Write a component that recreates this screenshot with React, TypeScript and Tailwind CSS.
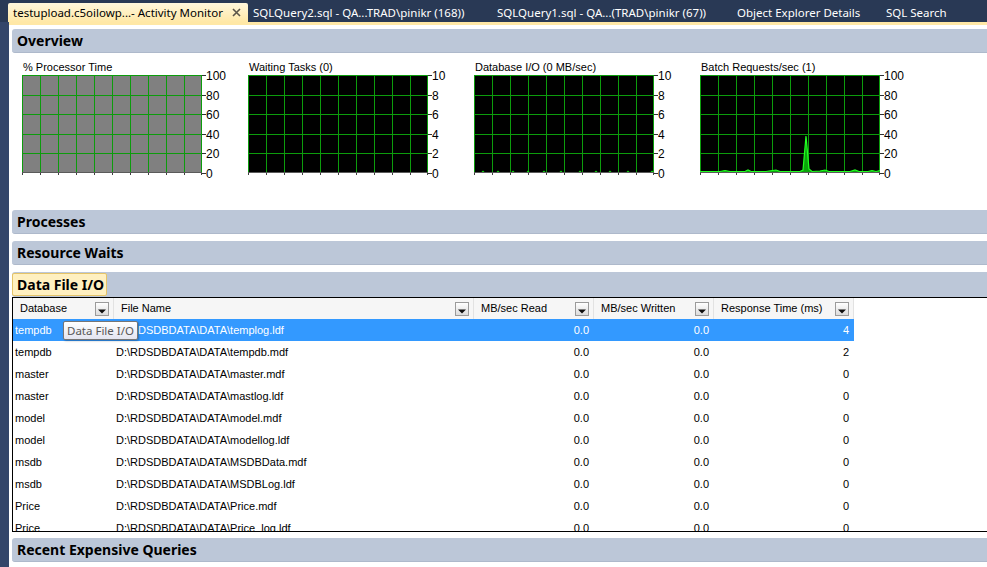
import React from "react";

const tabs = [
  { label: "SQLQuery2.sql - QA...TRAD\\pinikr (168))", w: "w-[244px]" },
  { label: "SQLQuery1.sql - QA...(TRAD\\pinikr (67))", w: "w-[240px]" },
  { label: "Object Explorer Details", w: "w-[149px]" },
  { label: "SQL Search", w: "w-[106px]" },
];

const rows = [
  ["tempdb", "D:\\RDSDBDATA\\DATA\\templog.ldf", "0.0", "0.0", "4"],
  ["tempdb", "D:\\RDSDBDATA\\DATA\\tempdb.mdf", "0.0", "0.0", "2"],
  ["master", "D:\\RDSDBDATA\\DATA\\master.mdf", "0.0", "0.0", "0"],
  ["master", "D:\\RDSDBDATA\\DATA\\mastlog.ldf", "0.0", "0.0", "0"],
  ["model", "D:\\RDSDBDATA\\DATA\\model.mdf", "0.0", "0.0", "0"],
  ["model", "D:\\RDSDBDATA\\DATA\\modellog.ldf", "0.0", "0.0", "0"],
  ["msdb", "D:\\RDSDBDATA\\DATA\\MSDBData.mdf", "0.0", "0.0", "0"],
  ["msdb", "D:\\RDSDBDATA\\DATA\\MSDBLog.ldf", "0.0", "0.0", "0"],
  ["Price", "D:\\RDSDBDATA\\DATA\\Price.mdf", "0.0", "0.0", "0"],
  ["Price", "D:\\RDSDBDATA\\DATA\\Price_log.ldf", "0.0", "0.0", "0"],
];

const columns = [
  { label: "Database", w: "w-[101px]" },
  { label: "File Name", w: "w-[360px]" },
  { label: "MB/sec Read", w: "w-[120px]" },
  { label: "MB/sec Written", w: "w-[120px]" },
  { label: "Response Time (ms)", w: "w-[140px]" },
];

const batchLine: [number, number][] = [
  [0, 1.5], [20, 1.5], [25, 2.5], [30, 1.5], [45, 1.5], [48, 3], [51, 1.5], [66, 1.5], [69, 2],
  [76, 3], [80, 1.5], [100, 1.5], [103, 3], [106, 37], [109, 4], [112, 1.5], [120, 2], [125, 3],
  [129, 1.5], [150, 1.5], [155, 3], [159, 1.5], [168, 1.5], [172, 2.5], [176, 1.5], [180, 2.5],
];

const ioBumps = [9, 24, 39, 54, 70, 87, 106, 122, 136, 154, 178];

const W = 180;
const H = 98;

function Chart({
  title,
  labels,
  bg,
  kind,
}: {
  title: string;
  labels: string[];
  bg: string;
  kind?: "io" | "batch";
}) {
  const rowsY = [0, 1, 2, 3, 4, 5].map((j) => Math.round(j * 19.6));
  return (
    <div className="w-[226px]">
      <div className="h-[12px] pl-px text-[11px] leading-[12px] text-black">{title}</div>
      <svg width={226} height={104} className="mt-[2px] block overflow-visible">
        <rect x={0} y={0} width={W} height={H} fill={bg} />
        {Array.from({ length: 11 }).map((_, i) => {
          const x = Math.min(i * 18, W - 1) + 0.5;
          return <line key={i} x1={x} y1={0} x2={x} y2={H} stroke="#0c9c0c" strokeWidth={1} />;
        })}
        {rowsY.slice(0, 5).map((y, j) => (
          <line key={j} x1={0} y1={y + 0.5} x2={W} y2={y + 0.5} stroke="#0c9c0c" strokeWidth={1} />
        ))}
        {kind === "batch" ? (
          <>
            <polygon
              points={`0,${H} ${batchLine.map(([x, v]) => `${x},${H - v}`).join(" ")} ${W},${H}`}
              fill="#0aa50a"
            />
            <polyline
              points={batchLine.map(([x, v]) => `${x},${H - v}`).join(" ")}
              fill="none"
              stroke="#22ff22"
              strokeWidth={1.2}
            />
          </>
        ) : null}
        {kind === "io"
          ? ioBumps.map((x) => (
              <polygon key={x} points={`${x - 2.5},${H} ${x},${H - 2.5} ${x + 2.5},${H}`} fill="#10e010" />
            ))
          : null}
        <line x1={0} y1={H - 0.5} x2={W} y2={H - 0.5} stroke="#5a5a5a" strokeWidth={1} />
        {Array.from({ length: 11 }).map((_, i) => {
          const x = Math.min(i * 18, W - 1) + 0.5;
          return <line key={i} x1={x} y1={H} x2={x} y2={H + 2} stroke="#404040" strokeWidth={1} />;
        })}
        {labels.map((label, j) => (
          <g key={label}>
            <line x1={W} y1={rowsY[j] + 0.5} x2={W + 4} y2={rowsY[j] + 0.5} stroke="#303030" strokeWidth={1} />
            <text
              x={W + 4}
              y={rowsY[j] + 4.5}
              fontSize={12}
              fontFamily="'Liberation Sans', Arial, sans-serif"
              fill="#000"
            >
              {label}
            </text>
          </g>
        ))}
      </svg>
    </div>
  );
}

function SectionHeader({ title }: { title: string }) {
  return (
    <div className="flex h-[24px] items-center rounded-l-[3px] border-b border-[#aeb9cb] bg-[#bcc7d8] pl-[5px] text-[14px] font-bold text-black">
      {title}
    </div>
  );
}

function DropButton() {
  return (
    <div className="flex h-[14px] w-[14px] items-end justify-center border border-[#9b9b9b] bg-linear-to-b from-white to-[#dcdcdc] pb-[1px]">
      <svg width={8} height={5}>
        <polygon points="0,0.5 8,0.5 4,4.5" fill="#111" />
      </svg>
    </div>
  );
}

export default function App() {
  const pct = ["100", "80", "60", "40", "20", "0"];
  const ten = ["10", "8", "6", "4", "2", "0"];

  return (
    <div className="flex h-[567px] w-[987px] flex-col overflow-hidden bg-[#293955] font-['Noto_Sans',sans-serif]">
      <div className="flex h-[22px] shrink-0 items-end pl-[8px] text-[11.5px] text-white">
        <div className="flex h-[19px] w-[240px] items-center rounded-t-[2px] bg-linear-to-b from-[#fff7dc] to-[#ffe8a6] pl-[5px] text-black">
          <span className="whitespace-nowrap">testupload.c5oilowp...- Activity Monitor</span>
          <svg width={9} height={9} className="ml-auto mr-[7px]">
            <path d="M1 1 L8 8 M8 1 L1 8" stroke="#5b5549" strokeWidth={1.6} />
          </svg>
        </div>
        {tabs.map((t) => (
          <div key={t.label} className={`flex h-[19px] ${t.w} items-center whitespace-nowrap pl-[5px]`}>
            {t.label}
          </div>
        ))}
      </div>

      <div className="flex min-h-0 flex-1">
        <div className="w-[9px] shrink-0 bg-[#34466a]" />
        <div className="flex min-w-0 flex-1 flex-col bg-white">
          <div className="h-[3px] shrink-0 bg-[#ffe8a6]" />
          <div className="flex flex-col pl-[3px] pt-[4px]">
            <SectionHeader title="Overview" />
            <div className="flex h-[157px] pl-[10px] pt-[8px] font-['Liberation_Sans',sans-serif]">
              <Chart title="% Processor Time" labels={pct} bg="#808080" />
              <Chart title="Waiting Tasks (0)" labels={ten} bg="#000" />
              <Chart title="Database I/O (0 MB/sec)" labels={ten} bg="#000" kind="io" />
              <Chart title="Batch Requests/sec (1)" labels={pct} bg="#000" kind="batch" />
            </div>

            <SectionHeader title="Processes" />
            <div className="mt-[7px]">
              <SectionHeader title="Resource Waits" />
            </div>

            <div className="mt-[7px] flex h-[25px] items-start rounded-l-[3px] bg-[#bcc7d8]">
              <div className="mt-px flex h-[23px] w-[95px] items-center rounded-[2px] border border-[#e5c468] bg-[#fff0c0] pl-[4px] text-[14px] font-bold text-black">
                Data File I/O
              </div>
            </div>

            <div className="relative h-[235px] overflow-hidden border-y border-l border-black font-['Liberation_Sans',sans-serif] text-[11px]">
              <div className="flex h-[21px]">
                {columns.map((c) => (
                  <div
                    key={c.label}
                    className={`${c.w} flex items-center justify-between border-r border-[#e2e2e2] bg-[#f6f6f6] pl-[7px] pr-[4px] text-black`}
                  >
                    <span>{c.label}</span>
                    <DropButton />
                  </div>
                ))}
              </div>
              {rows.map((r, i) => (
                <div
                  key={i}
                  className={`flex h-[22px] w-[841px] items-center ${i === 0 ? "bg-[#3399ff] text-white" : "text-black"}`}
                >
                  <div className="w-[101px] pl-[2px]">{r[0]}</div>
                  <div className="w-[360px] pl-[2px]">{r[1]}</div>
                  <div className="w-[120px] pr-[5px] text-right">{r[2]}</div>
                  <div className="w-[120px] pr-[5px] text-right">{r[3]}</div>
                  <div className="w-[140px] pr-[5px] text-right">{r[4]}</div>
                </div>
              ))}

              <div className="absolute left-[50px] top-[23px] flex h-[19px] w-[75px] items-center justify-center rounded-[2px] border border-[#767676] bg-linear-to-b from-white to-[#e4e5f0] font-['Noto_Sans',sans-serif] text-[11.5px] text-[#575757] shadow-[1px_1px_2px_rgba(0,0,0,0.3)]">
                Data File I/O
              </div>
            </div>

            <div className="mt-[6px]">
              <SectionHeader title="Recent Expensive Queries" />
            </div>
          </div>
        </div>
      </div>
    </div>
  );
}
